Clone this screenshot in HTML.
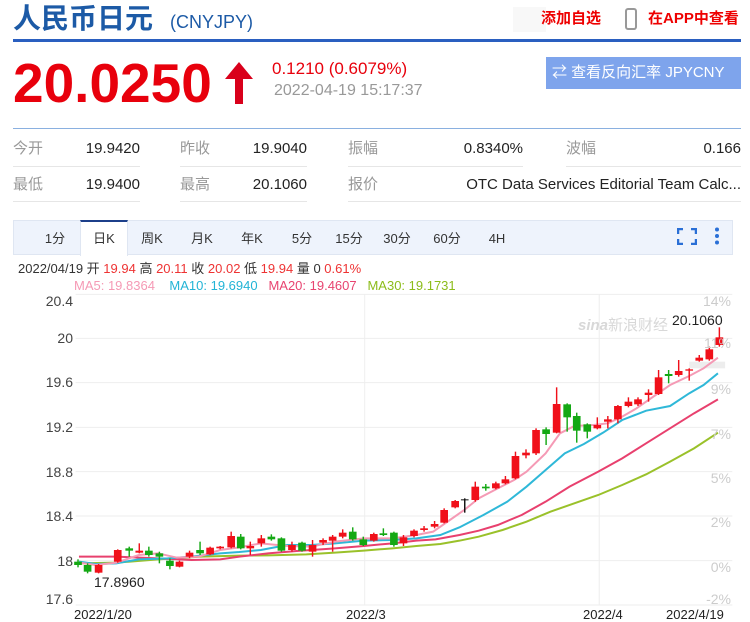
<!DOCTYPE html>
<html><head><meta charset="utf-8"><style>
*{margin:0;padding:0;box-sizing:border-box}
body{width:750px;height:622px;background:#fff;position:relative;overflow:hidden;font-family:"Liberation Sans","Noto Sans CJK SC",sans-serif;color:#333}
.a{position:absolute;white-space:nowrap}
.lb{color:#999;font-size:15px;line-height:20px}
.v{color:#222;font-size:15px;text-align:right;line-height:20px}
.tab{position:absolute;top:220px;height:35px;line-height:37px;font-size:13px;color:#333;text-align:center;width:48px}
.yl{position:absolute;right:677px;font-size:14px;color:#444;line-height:14px}
.pl{position:absolute;right:19px;font-size:14px;color:#ccc;line-height:14px}
</style></head><body>
<div class="a" style="left:13px;top:2px;font-size:28px;font-weight:bold;color:#1c5aa6;line-height:34px">人民币日元</div>
<div class="a" style="left:170px;top:10px;font-size:18px;color:#1c5aa6;line-height:24px">(CNYJPY)</div>
<div class="a" style="left:513px;top:7px;width:33px;height:25px;background:#f8f8f8"></div>
<div class="a" style="left:541px;top:9px;font-size:15px;font-weight:bold;color:#e00;line-height:20px">添加自选</div>
<div class="a" style="left:625px;top:8px;width:12px;height:22px;border:2px solid #999;border-radius:3px"></div>
<div class="a" style="left:648px;top:9px;font-size:15px;font-weight:bold;color:#e00;line-height:20px">在APP中查看</div>
<div class="a" style="left:13px;top:39px;width:728px;height:3px;background:#2a5fc0"></div>
<div class="a" style="left:13px;top:54px;font-size:55px;font-weight:bold;color:#e8000c;line-height:58px;letter-spacing:0px">20.0250</div>
<svg class="a" style="left:224px;top:62px" width="30" height="42"><polygon points="15,0 29,17 19,17 19,42 11,42 11,17 1,17" fill="#d9001b"/></svg>
<div class="a" style="left:272px;top:59px;font-size:17px;color:#e8000c;line-height:20px">0.1210 (0.6079%)</div>
<div class="a" style="left:274px;top:81px;font-size:16px;color:#999;line-height:20px">2022-04-19 15:17:37</div>
<div class="a" style="left:546px;top:57px;width:195px;height:32px;background:#7ea4ec;color:#fff;font-size:15px;line-height:32px;padding-left:6px">⇄ 查看反向汇率 JPYCNY</div>
<div class="a" style="left:13px;top:128px;width:728px;height:1px;background:#8ab0e0"></div>

<div class="a lb" style="left:13px;top:139px">今开</div><div class="a v" style="left:60px;width:80px;top:139px">19.9420</div>
<div class="a lb" style="left:180px;top:139px">昨收</div><div class="a v" style="left:227px;width:80px;top:139px">19.9040</div>
<div class="a lb" style="left:348px;top:139px">振幅</div><div class="a v" style="left:400px;width:123px;top:139px">0.8340%</div>
<div class="a lb" style="left:566px;top:139px">波幅</div><div class="a v" style="left:640px;width:101px;top:139px">0.166</div>
<div class="a lb" style="left:13px;top:175px">最低</div><div class="a v" style="left:60px;width:80px;top:175px">19.9400</div>
<div class="a lb" style="left:180px;top:175px">最高</div><div class="a v" style="left:227px;width:80px;top:175px">20.1060</div>
<div class="a lb" style="left:348px;top:175px">报价</div><div class="a v" style="left:420px;width:321px;top:175px">OTC Data Services Editorial Team Calc...</div>
<div class="a" style="left:13px;top:166px;width:127px;height:1px;background:#e6e6e6"></div>
<div class="a" style="left:180px;top:166px;width:127px;height:1px;background:#e6e6e6"></div>
<div class="a" style="left:348px;top:166px;width:175px;height:1px;background:#e6e6e6"></div>
<div class="a" style="left:566px;top:166px;width:175px;height:1px;background:#e6e6e6"></div>
<div class="a" style="left:13px;top:201px;width:127px;height:1px;background:#e6e6e6"></div>
<div class="a" style="left:180px;top:201px;width:127px;height:1px;background:#e6e6e6"></div>
<div class="a" style="left:348px;top:201px;width:393px;height:1px;background:#e6e6e6"></div>

<div class="a" style="left:13px;top:220px;width:720px;height:35px;background:#eef3fc;border:1px solid #dfe6f2"></div>
<div class="a" style="left:80px;top:220px;width:48px;height:36px;background:#fff;border-top:2px solid #1c3f8a;border-left:1px solid #dfe6f2;border-right:1px solid #dfe6f2"></div>
<div class="tab" style="left:31px">1分</div><div class="tab" style="left:80px">日K</div><div class="tab" style="left:128px">周K</div><div class="tab" style="left:178px">月K</div><div class="tab" style="left:228px">年K</div><div class="tab" style="left:278px">5分</div><div class="tab" style="left:325px">15分</div><div class="tab" style="left:373px">30分</div><div class="tab" style="left:423px">60分</div><div class="tab" style="left:473px">4H</div>
<svg class="a" style="left:677px;top:228px" width="20" height="17" fill="none" stroke="#2a6fd6" stroke-width="2.5"><path d="M1 6V1h5M14 1h5v5M19 11v5h-5M6 16H1v-5"/></svg>
<svg class="a" style="left:714px;top:227px" width="6" height="18" fill="#2a6fd6"><circle cx="3" cy="2.5" r="2"/><circle cx="3" cy="9" r="2"/><circle cx="3" cy="15.5" r="2"/></svg>

<div class="a" style="left:18px;top:261px;font-size:13px;color:#333;line-height:16px">2022/04/19 开 <span style="color:#e33">19.94</span> 高 <span style="color:#e33">20.11</span> 收 <span style="color:#e33">20.02</span> 低 <span style="color:#e33">19.94</span> 量 0 <span style="color:#e33">0.61%</span></div>
<div class="a" style="left:74px;top:278px;font-size:13px;line-height:16px"><span style="color:#f59ab5">MA5: 19.8364</span>&nbsp;&nbsp;&nbsp;&nbsp;<span style="color:#22b4d6">MA10: 19.6940</span>&nbsp;&nbsp;&nbsp;<span style="color:#e84470">MA20: 19.4607</span>&nbsp;&nbsp;&nbsp;<span style="color:#8cbc1a">MA30: 19.1731</span></div>

<svg class="a" style="left:0;top:290px" width="750" height="332" viewBox="0 0 1567 996" preserveAspectRatio="none">
<path vector-effect="non-scaling-stroke" stroke="#eee" stroke-width="1" d="M158 13H1530M158 145H1530M158 278H1530M158 412H1530M158 545H1530M158 678H1530M158 812H1530M158 945H1530M762 13V945M1252 13V945"/>
<g fill="#e6e6e6" opacity="0.7"><rect x="1440" y="215" width="75" height="20"/></g>
<g fill="none" stroke-width="2">
<polyline vector-effect="non-scaling-stroke" stroke="#9ac12a" points="165,820 243,818 330,808 420,800 500,797 560,796 640,793 700,788 760,782 820,775 870,768 920,762 960,752 1000,740 1050,720 1100,695 1150,665 1200,640 1250,615 1300,585 1350,553 1400,515 1450,475 1500,428"/>
<polyline vector-effect="non-scaling-stroke" stroke="#e8406e" points="165,800 243,800 330,805 400,810 460,808 500,800 560,790 620,783 700,775 760,768 820,760 870,752 910,748 960,735 1000,722 1040,705 1090,675 1140,635 1190,590 1250,545 1300,505 1350,460 1400,415 1450,370 1500,328"/>
<polyline vector-effect="non-scaling-stroke" stroke="#2fb8d8" points="165,815 200,822 243,820 290,808 350,805 400,800 460,790 500,786 545,780 600,765 650,765 700,760 760,752 820,750 870,745 920,735 960,712 1010,675 1060,635 1100,590 1140,540 1180,490 1220,462 1260,428 1300,390 1350,362 1400,348 1440,310 1470,285 1500,250"/>
<polyline vector-effect="non-scaling-stroke" stroke="#f59ab5" points="165,818 200,825 243,818 290,795 330,790 370,803 415,800 460,780 500,772 545,760 600,768 650,770 700,755 760,745 820,745 870,735 905,725 940,690 970,660 1000,625 1040,595 1074,570 1100,545 1140,490 1170,430 1200,408 1240,405 1270,400 1300,380 1330,355 1373,312 1400,285 1440,258 1470,235 1500,203"/>
</g>
<g id="k"></g>
</svg>
<script>
var d=[[160,815,825,808,832,'g'],[180,825,845,820,850,'g'],[203,825,848,822,850,'r'],[243,780,815,778,818,'r'],[267,775,782,770,800,'g'],[288,782,788,760,790,'r'],[308,782,795,770,800,'g'],[330,790,800,785,820,'g'],[352,812,828,805,838,'g'],[372,815,830,812,832,'r'],[393,788,800,782,805,'r'],[415,780,790,755,795,'g'],[436,773,793,770,795,'r'],[457,770,775,768,778,'r'],[480,738,772,725,775,'r'],[500,740,775,732,778,'g'],[520,768,775,755,795,'r'],[543,745,760,735,770,'r'],[564,740,748,733,752,'g'],[585,745,782,742,785,'g'],[607,765,780,755,785,'r'],[628,758,782,755,785,'g'],[650,765,785,750,800,'r'],[672,750,758,745,765,'r'],[692,740,752,735,785,'r'],[713,728,740,718,745,'r'],[734,725,748,712,752,'g'],[756,748,765,740,768,'g'],[778,732,752,728,755,'r'],[798,730,735,715,738,'g'],[820,728,765,725,770,'g'],[840,742,760,735,768,'r'],[862,722,738,718,742,'r'],[883,715,720,708,725,'r'],[905,702,710,693,715,'r'],[925,660,698,655,700,'r'],[948,633,652,630,655,'r'],[968,628,631,625,668,'k'],[990,590,630,575,635,'r'],[1012,590,595,582,602,'g'],[1033,580,595,575,598,'r'],[1053,568,580,558,583,'r'],[1074,498,565,485,568,'r'],[1096,488,496,478,505,'r'],[1117,420,490,415,495,'r'],[1138,418,432,412,465,'g'],[1160,342,428,292,430,'r'],[1182,343,382,340,425,'g'],[1202,378,422,368,458,'g'],[1224,403,425,400,445,'g'],[1245,405,415,382,418,'r'],[1267,388,395,378,415,'r'],[1288,348,388,345,400,'r'],[1310,335,348,322,352,'r'],[1330,328,343,322,348,'r'],[1352,308,315,298,335,'r'],[1373,262,312,240,315,'r'],[1394,252,258,240,280,'g'],[1415,243,255,210,260,'r'],[1437,238,242,235,272,'r'],[1458,203,212,195,215,'r'],[1479,178,208,170,212,'r'],[1500,142,165,112,170,'r']];
var col={r:'#f0101a',g:'#14a814',k:'#111'},s='';
d.forEach(function(c){var x=c[0]+3,f=col[c[5]];s+='<rect x="'+(x-1.5)+'" y="'+c[3]+'" width="3" height="'+(c[4]-c[3])+'" fill="'+f+'"/><rect x="'+(x-8)+'" y="'+c[1]+'" width="16" height="'+Math.max(3,c[2]-c[1])+'" fill="'+f+'"/>';});
document.getElementById('k').innerHTML=s;
</script>
<div class="yl" style="top:294px">20.4</div>
<div class="yl" style="top:331px">20</div>
<div class="yl" style="top:375px">19.6</div>
<div class="yl" style="top:420px">19.2</div>
<div class="yl" style="top:465px">18.8</div>
<div class="yl" style="top:509px">18.4</div>
<div class="yl" style="top:554px">18</div>
<div class="yl" style="top:592px">17.6</div>
<div class="pl" style="top:294px">14%</div>
<div class="pl" style="top:336px">11%</div>
<div class="pl" style="top:382px">9%</div>
<div class="pl" style="top:427px">7%</div>
<div class="pl" style="top:471px">5%</div>
<div class="pl" style="top:515px">2%</div>
<div class="pl" style="top:560px">0%</div>
<div class="pl" style="top:592px">-2%</div>
<div class="a" style="left:578px;top:314px;font-size:15px;color:#d8d8d8;font-style:italic;font-weight:bold">sina<span style="font-weight:normal;font-style:normal">新浪财经</span></div>
<div class="a" style="left:672px;top:312px;font-size:14px;color:#222">20.1060</div>
<div class="a" style="left:94px;top:574px;font-size:14px;color:#222">17.8960</div>
<div class="a" style="left:74px;top:607px;font-size:13px;color:#222">2022/1/20</div>
<div class="a" style="left:346px;top:607px;font-size:13px;color:#222">2022/3</div>
<div class="a" style="left:583px;top:607px;font-size:13px;color:#222">2022/4</div>
<div class="a" style="left:666px;top:607px;font-size:13px;color:#222">2022/4/19</div>
</body></html>
